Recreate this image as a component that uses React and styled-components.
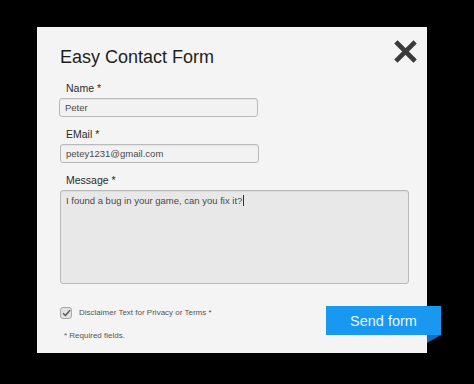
import styled, { createGlobalStyle } from 'styled-components'

const GlobalStyle = createGlobalStyle`
  html, body {
    margin: 0;
    padding: 0;
    background: #000;
  }
  body {
    font-family: "Liberation Sans", Arial, sans-serif;
  }
`

const Page = styled.div`
  width: 474px;
  height: 384px;
  padding: 27px 0 0 37px;
  box-sizing: border-box;
`

const Panel = styled.div`
  width: 390px;
  height: 326px;
  box-sizing: border-box;
  padding: 19px 18px 0 23px;
  background: #f4f4f4;
  display: flex;
  flex-direction: column;
`

const Header = styled.div`
  display: flex;
  justify-content: space-between;
  align-items: flex-start;
`

const Title = styled.h1`
  margin: 0;
  font-size: 18px;
  line-height: 22px;
  font-weight: normal;
  color: #1e1e1e;
`

const Close = styled.button`
  margin: -6px -8px 0 0;
  padding: 0;
  border: 0;
  background: none;
  width: 23px;
  height: 23px;
  cursor: pointer;
  color: #3a3a3a;
  svg {
    display: block;
  }
`

const Field = styled.div`
  display: flex;
  flex-direction: column;
  margin-top: ${(p) => (p.$first ? '14px' : '11px')};
`

const Label = styled.label`
  font-size: 10.5px;
  line-height: 12px;
  color: #2b2b2b;
  padding-left: 6px;
  margin-bottom: 4px;
`

const Input = styled.div`
  width: ${(p) => (p.$wide ? '349px' : '199px')};
  height: ${(p) => (p.$tall ? '94px' : '19px')};
  box-sizing: border-box;
  border: 1px solid #b9b9b9;
  border-radius: 3px;
  background: ${(p) => (p.$tall ? '#e8e8e8' : '#f2f2f2')};
  box-shadow: inset 0 1px 1px rgba(0, 0, 0, 0.06);
  padding: ${(p) => (p.$tall ? '3px 5px' : '0 5px')};
  font-size: 9.5px;
  line-height: ${(p) => (p.$tall ? '13px' : '17px')};
  color: #4a4a4a;
  margin-left: ${(p) => (p.$shift ? '-1px' : '0')};
`

const Caret = styled.span`
  display: inline-block;
  width: 1px;
  height: 11px;
  margin-left: 1px;
  vertical-align: -2px;
  background: #333;
`

const Footer = styled.div`
  display: flex;
  justify-content: space-between;
  align-items: flex-start;
  margin: 22px -32px 0 0;
`

const Terms = styled.div`
  display: flex;
  flex-direction: column;
  padding-top: 1px;
`

const CheckRow = styled.div`
  display: flex;
  align-items: center;
  gap: 7px;
`

const Box = styled.span`
  width: 12px;
  height: 12px;
  box-sizing: border-box;
  border: 1px solid #a8a8a8;
  border-radius: 3px;
  background: #e2e2e2;
  display: flex;
  align-items: center;
  justify-content: center;
  color: #555;
`

const Small = styled.span`
  font-size: 8px;
  line-height: 10px;
  color: #555;
`

const Required = styled(Small)`
  margin: 12px 0 0 4px;
`

const SendButton = styled.button`
  position: relative;
  width: 115px;
  height: 29px;
  border: 0;
  padding: 0;
  background: #1898f0;
  color: #eaf5ff;
  font-family: "Liberation Sans", Arial, sans-serif;
  font-size: 14.5px;
  cursor: pointer;
  &::after {
    content: '';
    position: absolute;
    right: 0;
    top: 100%;
    width: 14px;
    height: 8px;
    background: #0d6fc2;
    clip-path: polygon(0 0, 100% 0, 0 100%);
  }
`

export default function App() {
  return (
    <Page>
      <GlobalStyle />
      <Panel>
        <Header>
          <Title>Easy Contact Form</Title>
          <Close aria-label="Close">
            <svg width="23" height="23" viewBox="0 0 23 23">
              <path
                d="M3.5 3.5 L19.5 19.5 M19.5 3.5 L3.5 19.5"
                stroke="currentColor"
                strokeWidth="4.6"
                strokeLinecap="square"
              />
            </svg>
          </Close>
        </Header>

        <Field $first>
          <Label>Name *</Label>
          <Input $shift>Peter</Input>
        </Field>
        <Field>
          <Label>EMail *</Label>
          <Input>petey1231@gmail.com</Input>
        </Field>
        <Field>
          <Label>Message *</Label>
          <Input $wide $tall>
            I found a bug in your game, can you fix it?<Caret />
          </Input>
        </Field>

        <Footer>
          <Terms>
            <CheckRow>
              <Box>
                <svg width="9" height="8" viewBox="0 0 9 8">
                  <path d="M1 4.2 L3.4 6.4 L8 1.2" fill="none" stroke="currentColor" strokeWidth="1.4" />
                </svg>
              </Box>
              <Small>Disclaimer Text for Privacy or Terms *</Small>
            </CheckRow>
            <Required>* Required fields.</Required>
          </Terms>
          <SendButton>Send form</SendButton>
        </Footer>
      </Panel>
    </Page>
  )
}
